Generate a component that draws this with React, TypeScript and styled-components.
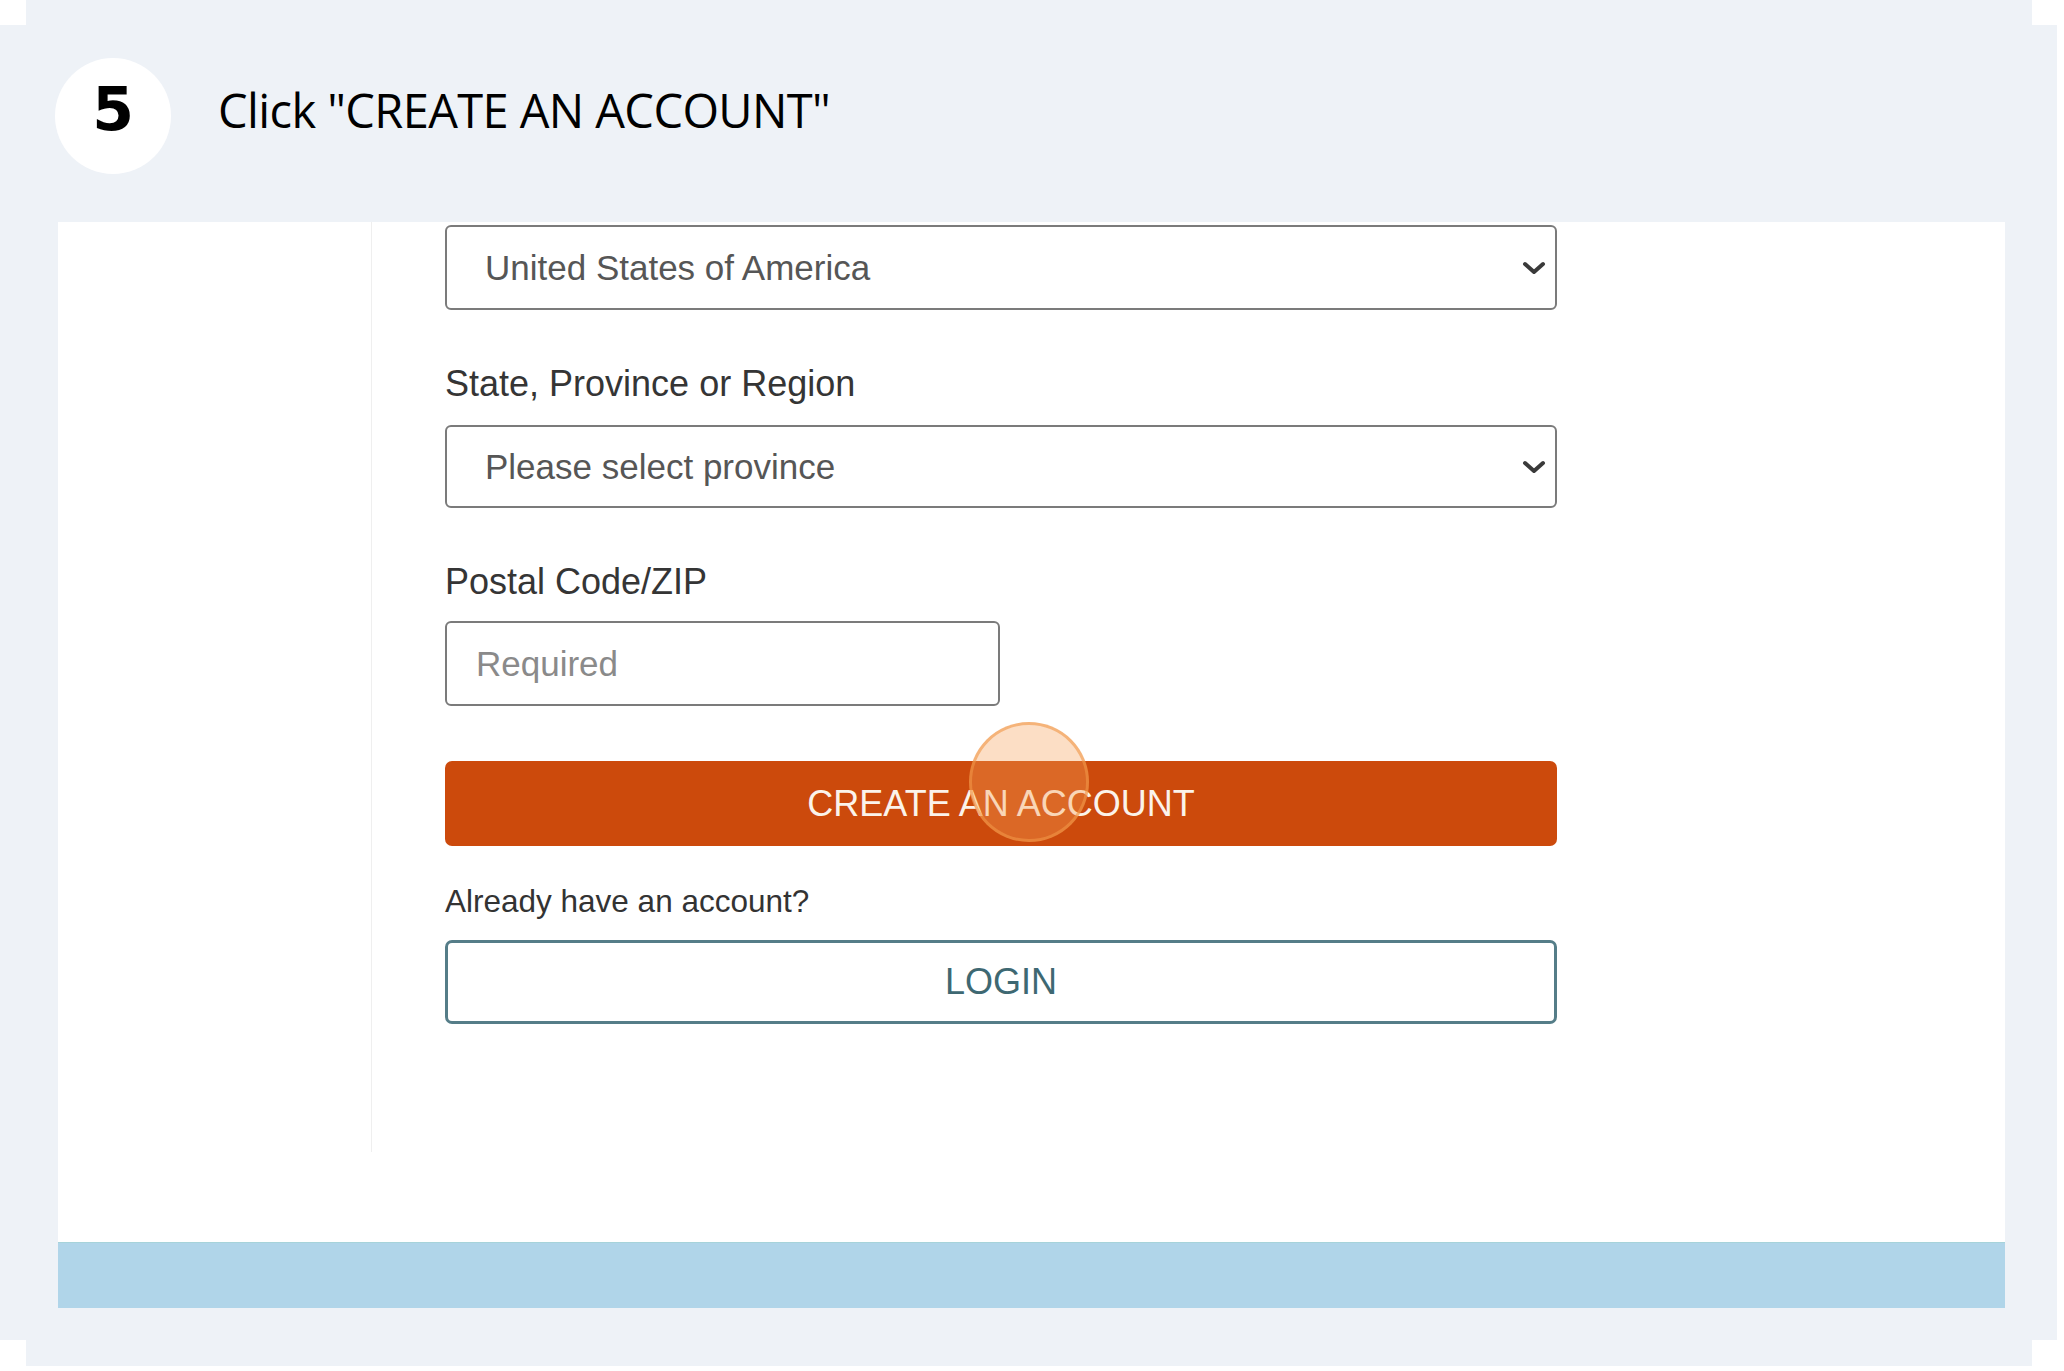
import styled, { createGlobalStyle } from "styled-components";

const GlobalStyle = createGlobalStyle`
    html {
        margin: 0;
        padding: 0;
    }
    body {
        margin: 0;
        padding: 0;
        /* the wide grey sheet behind the step card */
        background: #ffffff linear-gradient(#eef2f7, #eef2f7) 0 25px / 2057px 1315px no-repeat;
        font-family: "Liberation Sans", Arial, sans-serif;
    }
`

const Sheet = styled.div`
    margin: 0 32px 0 26px;
    height: 1366px;
    background: #eef2f7;
    display: flex;
    flex-direction: column;
`

const StepHeader = styled.header`
    height: 222px;
    box-sizing: border-box;
    padding: 58px 0 0 29px;
    display: flex;
    align-items: flex-start;
    gap: 47px;
`

const StepBadge = styled.div`
    width: 116px;
    height: 116px;
    border-radius: 50%;
    background: #ffffff;
    display: flex;
    align-items: center;
    justify-content: center;
    box-sizing: border-box;
    padding-bottom: 14px;
    font: 700 60px/1 "DejaVu Sans", sans-serif;
    color: #000000;
`

const StepTitle = styled.h1`
    margin: 29px 0 0 0;
    font: 400 47px/1 "Open Sans", sans-serif;
    letter-spacing: -0.6px;
    color: #000000;
    white-space: nowrap;
`

const Panel = styled.section`
    margin: 0 27px 0 32px;
    height: 1086px;
    background: #ffffff;
    display: flex;
    flex-direction: column;
`

const FormArea = styled.div`
    display: grid;
    grid-template-columns: 314px 1fr;
    height: 930px;
`

const SideColumn = styled.div`
    border-right: 1px solid #efefef;
`

const FormColumn = styled.div`
    padding-left: 73px;
    display: flex;
    flex-direction: column;
`

const SelectBox = styled.div<{ $top: number; $height: number }>`
    margin-top: ${p => p.$top}px;
    width: 1112px;
    height: ${p => p.$height}px;
    box-sizing: border-box;
    border: 2px solid #7b7b7b;
    border-radius: 6px;
    padding: 0 9px 0 38px;
    display: flex;
    align-items: center;
    justify-content: space-between;
    font-size: 35px;
    color: #565656;
`

const FieldLabel = styled.label`
    margin-top: 54px;
    font-size: 36px;
    line-height: 40px;
    color: #353535;
`

const TextInput = styled.input`
    margin-top: 19px;
    width: 555px;
    height: 85px;
    box-sizing: border-box;
    border: 2px solid #7b7b7b;
    border-radius: 6px;
    padding: 0 0 0 29px;
    font-family: "Liberation Sans", Arial, sans-serif;
    font-size: 35px;
    color: #333;
    background: #fff;
    outline: none;
    &::placeholder {
        color: #8a8a8a;
    }
`

const CreateButton = styled.button`
    position: relative;
    margin-top: 55px;
    width: 1112px;
    height: 85px;
    border: none;
    border-radius: 7px;
    background: #cc4a0c;
    color: #fbf3ea;
    font-family: "Liberation Sans", Arial, sans-serif;
    font-size: 36px;
    padding: 0;
`

const ClickMarker = styled.span`
    position: absolute;
    left: 524px;
    top: -39px;
    width: 120px;
    height: 120px;
    box-sizing: border-box;
    border-radius: 50%;
    background: rgba(245, 160, 90, 0.35);
    border: 3px solid rgba(240, 150, 70, 0.6);
`

const HintText = styled.div`
    margin-top: 37px;
    font-size: 31.5px;
    line-height: 36px;
    color: #333333;
`

const LoginButton = styled.button`
    margin-top: 21px;
    width: 1112px;
    height: 84px;
    border: 3px solid #557d88;
    border-radius: 7px;
    background: #ffffff;
    color: #3e6872;
    font-family: "Liberation Sans", Arial, sans-serif;
    font-size: 36px;
    padding: 0;
`

const FooterBand = styled.div`
    margin-top: auto;
    height: 66px;
    box-sizing: border-box;
    border-top: 1px solid #a6d3da;
    background: #b0d5e9;
`

const Chevron = () => (
    <svg width="24" height="14" viewBox="0 0 24 14">
        <path d="M3 3 L12 11 L21 3" fill="none" stroke="#3a3a3a" strokeWidth="4" strokeLinecap="round" strokeLinejoin="round" />
    </svg>
)

export default function App() {
    return (
        <>
            <GlobalStyle />
            <Sheet>
                <StepHeader>
                    <StepBadge>5</StepBadge>
                    <StepTitle>Click "CREATE AN ACCOUNT"</StepTitle>
                </StepHeader>
                <Panel>
                    <FormArea>
                        <SideColumn />
                        <FormColumn>
                            <SelectBox $top={3} $height={85}>
                                <span>United States of America</span>
                                <Chevron />
                            </SelectBox>
                            <FieldLabel>State, Province or Region</FieldLabel>
                            <SelectBox $top={21} $height={83}>
                                <span>Please select province</span>
                                <Chevron />
                            </SelectBox>
                            <FieldLabel>Postal Code/ZIP</FieldLabel>
                            <TextInput placeholder="Required" />
                            <CreateButton>
                                CREATE AN ACCOUNT
                                <ClickMarker />
                            </CreateButton>
                            <HintText>Already have an account?</HintText>
                            <LoginButton>LOGIN</LoginButton>
                        </FormColumn>
                    </FormArea>
                    <FooterBand />
                </Panel>
            </Sheet>
        </>
    )
}
